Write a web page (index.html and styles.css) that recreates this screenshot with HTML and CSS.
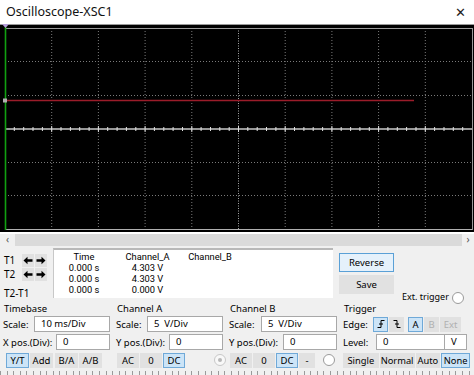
FILE: index.html
```html
<!DOCTYPE html>
<html>
<head>
<meta charset="utf-8">
<link rel="stylesheet" href="styles.css">
</head>
<body>
<div class="win">
  <div class="titlebar">
    <span class="title">Oscilloscope-XSC1</span>
    <span class="close">✕</span>
  </div>
  <div class="screen">
    <svg width="474" height="208" viewBox="0 0 474 208">
      <rect x="0" y="0" width="474" height="208" fill="#000"/>
      <line x1="0" y1="0.5" x2="474" y2="0.5" stroke="#9a9a9a"/>
      <g stroke="#7a7a7a" stroke-width="1" stroke-dasharray="1 2">
        <line x1="51.7" y1="4" x2="51.7" y2="205"/>
        <line x1="98.4" y1="4" x2="98.4" y2="205"/>
        <line x1="145.1" y1="4" x2="145.1" y2="205"/>
        <line x1="191.8" y1="4" x2="191.8" y2="205"/>
        <line x1="285.2" y1="4" x2="285.2" y2="205"/>
        <line x1="331.9" y1="4" x2="331.9" y2="205"/>
        <line x1="378.6" y1="4" x2="378.6" y2="205"/>
        <line x1="425.3" y1="4" x2="425.3" y2="205"/>
        <line x1="5" y1="37.5" x2="472" y2="37.5"/>
        <line x1="5" y1="71.5" x2="472" y2="71.5"/>
        <line x1="5" y1="138.5" x2="472" y2="138.5"/>
        <line x1="5" y1="171.5" x2="472" y2="171.5"/>
      </g>
      <g stroke="#a8a8a8" stroke-width="1" stroke-dasharray="1 1.5">
        <line x1="238.5" y1="4" x2="238.5" y2="205"/>
      </g>
      <line x1="5" y1="4.5" x2="472" y2="4.5" stroke="#9a9a9a"/>
      <line x1="5" y1="205.5" x2="472" y2="205.5" stroke="#b0b0b0"/>
      <line x1="472.5" y1="4" x2="472.5" y2="206" stroke="#9a9a9a"/>
      <line x1="5" y1="105" x2="472" y2="105" stroke="#c8c8c8" stroke-width="1.3"/>
      <g stroke="#e0e0e0" stroke-width="1">
        <line x1="14.3" y1="103" x2="14.3" y2="107"/>
        <line x1="23.7" y1="103" x2="23.7" y2="107"/>
        <line x1="33" y1="103" x2="33" y2="107"/>
        <line x1="42.4" y1="103" x2="42.4" y2="107"/>
        <line x1="61" y1="103" x2="61" y2="107"/>
        <line x1="70.4" y1="103" x2="70.4" y2="107"/>
        <line x1="79.7" y1="103" x2="79.7" y2="107"/>
        <line x1="89.1" y1="103" x2="89.1" y2="107"/>
        <line x1="107.7" y1="103" x2="107.7" y2="107"/>
        <line x1="117.1" y1="103" x2="117.1" y2="107"/>
        <line x1="126.4" y1="103" x2="126.4" y2="107"/>
        <line x1="135.8" y1="103" x2="135.8" y2="107"/>
        <line x1="154.4" y1="103" x2="154.4" y2="107"/>
        <line x1="163.8" y1="103" x2="163.8" y2="107"/>
        <line x1="173.1" y1="103" x2="173.1" y2="107"/>
        <line x1="182.5" y1="103" x2="182.5" y2="107"/>
        <line x1="201.1" y1="103" x2="201.1" y2="107"/>
        <line x1="210.5" y1="103" x2="210.5" y2="107"/>
        <line x1="219.8" y1="103" x2="219.8" y2="107"/>
        <line x1="229.2" y1="103" x2="229.2" y2="107"/>
        <line x1="247.8" y1="103" x2="247.8" y2="107"/>
        <line x1="257.2" y1="103" x2="257.2" y2="107"/>
        <line x1="266.5" y1="103" x2="266.5" y2="107"/>
        <line x1="275.9" y1="103" x2="275.9" y2="107"/>
        <line x1="294.5" y1="103" x2="294.5" y2="107"/>
        <line x1="303.9" y1="103" x2="303.9" y2="107"/>
        <line x1="313.2" y1="103" x2="313.2" y2="107"/>
        <line x1="322.6" y1="103" x2="322.6" y2="107"/>
        <line x1="341.2" y1="103" x2="341.2" y2="107"/>
        <line x1="350.6" y1="103" x2="350.6" y2="107"/>
        <line x1="359.9" y1="103" x2="359.9" y2="107"/>
        <line x1="369.3" y1="103" x2="369.3" y2="107"/>
        <line x1="387.9" y1="103" x2="387.9" y2="107"/>
        <line x1="397.3" y1="103" x2="397.3" y2="107"/>
        <line x1="406.6" y1="103" x2="406.6" y2="107"/>
        <line x1="416" y1="103" x2="416" y2="107"/>
        <line x1="434.6" y1="103" x2="434.6" y2="107"/>
        <line x1="444" y1="103" x2="444" y2="107"/>
        <line x1="453.3" y1="103" x2="453.3" y2="107"/>
        <line x1="462.7" y1="103" x2="462.7" y2="107"/>
        <line x1="51.7" y1="102" x2="51.7" y2="108"/>
        <line x1="98.4" y1="102" x2="98.4" y2="108"/>
        <line x1="145.1" y1="102" x2="145.1" y2="108"/>
        <line x1="191.8" y1="102" x2="191.8" y2="108"/>
        <line x1="238.5" y1="102" x2="238.5" y2="108"/>
        <line x1="285.2" y1="102" x2="285.2" y2="108"/>
        <line x1="331.9" y1="102" x2="331.9" y2="108"/>
        <line x1="378.6" y1="102" x2="378.6" y2="108"/>
        <line x1="425.3" y1="102" x2="425.3" y2="108"/>
      </g>
      <line x1="6" y1="76.5" x2="414" y2="76.5" stroke="#9b1c2a" stroke-width="1.4"/>
      <line x1="5.5" y1="3" x2="5.5" y2="206" stroke="#11a011" stroke-width="1.6"/>
      <polygon points="2,0 9,0 5.5,4" fill="#b49cd8"/>
      <rect x="3" y="74.5" width="4" height="4" fill="#b0b0b0"/>
    </svg>
  </div>
  <div class="gap"></div>
  <div class="hscroll">
    <span class="sarrow">‹</span>
    <span class="strack"></span>
    <span class="sarrow right">›</span>
  </div>
  <div class="readout">
    <div class="cursors">
      <div class="crow"><span class="clabel">T1</span>
        <span class="arrows">
          <span class="ab"><svg width="10" height="9" viewBox="0 0 10 9"><path d="M0.5 4.5 L4.5 0.8 V3.2 H9.5 V5.8 H4.5 V8.2 Z" fill="#000"/></svg></span>
          <span class="ab"><svg width="10" height="9" viewBox="0 0 10 9"><path d="M9.5 4.5 L5.5 0.8 V3.2 H0.5 V5.8 H5.5 V8.2 Z" fill="#000"/></svg></span>
        </span>
      </div>
      <div class="crow"><span class="clabel">T2</span>
        <span class="arrows">
          <span class="ab"><svg width="10" height="9" viewBox="0 0 10 9"><path d="M0.5 4.5 L4.5 0.8 V3.2 H9.5 V5.8 H4.5 V8.2 Z" fill="#000"/></svg></span>
          <span class="ab"><svg width="10" height="9" viewBox="0 0 10 9"><path d="M9.5 4.5 L5.5 0.8 V3.2 H0.5 V5.8 H5.5 V8.2 Z" fill="#000"/></svg></span>
        </span>
      </div>
      <div class="crow last"><span class="clabel">T2-T1</span></div>
    </div>
    <div class="table">
      <div class="col c-time"><span>Time</span><span>0.000 s</span><span>0.000 s</span><span>0.000 s</span></div>
      <div class="col c-a"><span>Channel_A</span><span>4.303 V</span><span>4.303 V</span><span>0.000 V</span></div>
      <div class="col c-b"><span>Channel_B</span></div>
    </div>
    <div class="rbtns">
      <div class="btn reverse">Reverse</div>
      <div class="btn save">Save</div>
    </div>
    <div class="ext">
      <span>Ext. trigger</span><span class="radio"></span>
    </div>
  </div>
  <div class="controls">
    <div class="group g-time">
      <div class="gtitle">Timebase</div>
      <div class="row"><span class="lbl">Scale:</span><span class="inp w-scale">10 ms/Div</span></div>
      <div class="row"><span class="lbl">X pos.(Div):</span><span class="inp w-pos">0</span></div>
      <div class="brow">
        <span class="b tb sel">Y/T</span><span class="b tb">Add</span><span class="sp"></span><span class="b tb">B/A</span><span class="b tb">A/B</span>
      </div>
    </div>
    <div class="group g-a">
      <div class="gtitle">Channel A</div>
      <div class="row"><span class="lbl">Scale:</span><span class="inp w-scale">5&nbsp; V/Div</span></div>
      <div class="row"><span class="lbl">Y pos.(Div):</span><span class="inp w-pos">0</span></div>
      <div class="brow">
        <span class="b">AC</span><span class="b">0</span><span class="b sel">DC</span><span class="fill"></span><span class="radio dim"><span class="dot"></span></span>
      </div>
    </div>
    <div class="group g-b">
      <div class="gtitle">Channel B</div>
      <div class="row"><span class="lbl">Scale:</span><span class="inp w-scale">5&nbsp; V/Div</span></div>
      <div class="row"><span class="lbl">Y pos.(Div):</span><span class="inp w-pos">0</span></div>
      <div class="brow">
        <span class="b">AC</span><span class="b">0</span><span class="b sel">DC</span><span class="b narrow">-</span><span class="fill"></span><span class="radio"></span>
      </div>
    </div>
    <div class="group g-trig">
      <div class="gtitle">Trigger</div>
      <div class="row"><span class="lbl">Edge:</span>
        <span class="edges">
          <span class="e sel"><svg width="10" height="10" viewBox="0 0 10 10"><path d="M1.5 8.5 H5 V1.5 H8.5 M3 5 H7" fill="none" stroke="#000" stroke-width="1"/></svg></span>
          <span class="e"><svg width="10" height="10" viewBox="0 0 10 10"><path d="M1.5 1.5 H5 V8.5 H8.5 M3 5 H7" fill="none" stroke="#000" stroke-width="1"/></svg></span>
          <span class="sp2"></span>
          <span class="e sel">A</span><span class="e dis">B</span><span class="e dis wide">Ext</span>
        </span>
      </div>
      <div class="row"><span class="lbl">Level:</span><span class="inp w-level">0</span><span class="inp w-unit">V</span></div>
      <div class="brow trig">
        <span class="b t-single">Single</span><span class="b t-normal">Normal</span><span class="b t-auto">Auto</span><span class="b t-none sel">None</span>
      </div>
    </div>
  </div>
  <div class="ruler"></div>
</div>
</body>
</html>
```

FILE: styles.css
```css
* { box-sizing: border-box; }
html, body { margin: 0; padding: 0; }
body {
  width: 474px; height: 375px; overflow: hidden;
  background: #f0f0f0;
  font-family: "Noto Sans", "Open Sans", sans-serif;
  font-size: 9px;
  color: #000;
}
.win { width: 474px; height: 375px; display: flex; flex-direction: column; }
.titlebar {
  height: 24px; background: #fff; flex: none;
  display: flex; align-items: center; justify-content: space-between;
  padding: 0 6px 1px 6px;
}
.title { font-size: 12.5px; color: #111; }
.close { font-size: 13px; color: #222; margin-right: 2px; }
.screen { height: 208px; flex: none; line-height: 0; }
.screen svg { display: block; }
.gap { height: 2px; background: #fff; flex: none; }
.hscroll {
  height: 12px; flex: none; display: flex; background: #f0f0f0;
}
.sarrow { width: 15px; font-size: 10px; line-height: 11px; text-align: center; color: #555; background: #f0f0f0; }
.sarrow.right { width: 12px; }
.strack { flex: 1; background: #dadada; }
.readout {
  height: 52px; flex: none; display: flex; margin-top: 2px;
}
.cursors { width: 53px; padding: 5px 0 0 4px; flex: none; }
.crow { display: flex; align-items: center; height: 14px; }
.crow.last { height: 19px; align-items: flex-end; }
.clabel { width: 18px; font-size: 10px; white-space: nowrap; flex: none; }
.arrows { display: flex; gap: 1px; }
.ab {
  width: 12px; height: 13px; background: #e1e1e1;
  display: flex; align-items: center; justify-content: center;
}
.table {
  width: 280px; background: #fff; border-top: 2px solid #b8b8b8; border-left: 1px solid #c8c8c8;
  display: flex; margin-bottom: 2px; flex: none;
}
.col {
  display: flex; flex-direction: column; align-items: center; padding-top: 1px;
  font-family: Roboto, "Noto Sans", sans-serif; font-size: 9.3px; line-height: 11px;
}
.col span { display: block; height: 11px; white-space: nowrap; }
.c-time { width: 60px; }
.c-a { width: 67px; }
.c-b { width: 58px; }
.rbtns { display: flex; flex-direction: column; gap: 3px; margin-left: 6px; padding-top: 5px; }
.btn {
  width: 55px; height: 19px; display: flex; align-items: center; justify-content: center;
  background: #e1e1e1; border: 1px solid #e1e1e1; font-size: 9.5px;
}
.btn.reverse { background: #e5f1fb; border-color: #5aa0d6; }
.ext { display: flex; align-items: flex-end; gap: 3px; padding: 0 0 0 8px; margin-bottom: -4px; }
.ext span:first-child { padding-bottom: 1px; }
.radio {
  display: inline-block; width: 12px; height: 12px; border-radius: 50%;
  border: 1px solid #9a9a9a; background: #fff; flex: none;
}
.radio.dim { border-color: #c8c8c8; background: #f8f8f8; position: relative; }
.radio.dim .dot { position: absolute; left: 3px; top: 3px; width: 4px; height: 4px; border-radius: 50%; background: #b8b8b8; }
.controls { display: flex; padding: 3px 0 0 3px; height: 69px; flex: none; }
.group { display: flex; flex-direction: column; }
.g-time { width: 113px; }
.g-a { width: 113px; }
.g-b { width: 114px; }
.g-trig { width: 128px; }
.gtitle { height: 12px; line-height: 12px; font-size: 9.5px; padding-left: 1px; }
.row { display: flex; align-items: center; height: 18px; }
.lbl { font-size: 9.5px; flex: 1; white-space: nowrap; }
.inp {
  height: 16px; background: #fff; border: 1px solid #a8a8a8;
  padding: 0 0 0 6px; line-height: 14px; font-size: 9.5px;
}
.w-scale { width: 76px; margin-right: 6px; }
.w-pos { width: 54px; margin-right: 6px; }
.w-level { width: 69px; }
.w-unit { width: 22px; margin-right: 4px; border-left: none; }
.brow { display: flex; align-items: center; margin-top: 1px; height: 16px; padding-left: 3px; }
.b {
  height: 15px; width: 22px; text-align: center; white-space: nowrap;
  background: #e1e1e1; border: 1px solid #e1e1e1; line-height: 13px; font-size: 9.5px; margin-right: 1px;
}
.b.tb { width: 23px; }
.b.narrow { width: 16px; }
.b.sel { background: #cce4f7; border-color: #6fa9d8; }
.sp { width: 1px; }
.fill { flex: 1; }
.g-a .brow { padding-left: 1px; }
.g-b .brow { padding-left: 1px; }
.g-a .radio { margin-right: 3px; }
.g-b .radio { margin-right: 8px; }
.edges { display: flex; align-items: center; margin-right: 9px; }
.e {
  width: 15px; height: 15px; background: #e1e1e1; border: 1px solid #e1e1e1;
  display: flex; align-items: center; justify-content: center; font-size: 9.5px; margin-right: 1px;
}
.e.sel { background: #cce4f7; border-color: #6fa9d8; }
.e.dis { color: #b0b0b0; }
.e.wide { width: 21px; }
.sp2 { width: 3px; }
.trig { padding-left: 0; }
.trig .b { padding: 0; font-size: 9.3px; }
.t-single { width: 36px !important; }
.t-normal { width: 35px !important; }
.t-auto { width: 25px !important; }
.t-none { width: 29px !important; }
.ruler {
  flex: 1;
  background-color: #f0f0f0;
  background-image: repeating-linear-gradient(90deg, #9a9a9a 0 1px, transparent 1px 6.6px);
  background-size: 100% 4px; background-repeat: no-repeat; background-position: 0 100%;
}
```
